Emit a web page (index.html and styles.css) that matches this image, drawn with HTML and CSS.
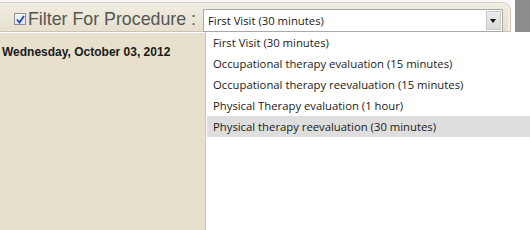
FILE: index.html
```html
<!DOCTYPE html>
<html>
<head>
<meta charset="utf-8">
<link rel="stylesheet" href="styles.css">
</head>
<body>
<div class="header">
  <div class="panel">
    <label class="filter">
      <span class="check">
        <svg width="9" height="9" viewBox="0 0 9 9"><path d="M1 4.5 L3.5 7.5 L8 1" fill="none" stroke="#2a3fb8" stroke-width="1.8"/></svg>
      </span>
      <span class="filter-label">Filter For Procedure :</span>
    </label>
    <div class="select">
      <span class="select-text">First Visit (30 minutes)</span>
      <span class="select-btn"><span class="arrow"></span></span>
    </div>
  </div>
  <div class="gap"></div>
  <div class="gutter"></div>
</div>
<div class="main">
  <div class="left">
    <div class="date">Wednesday, October 03, 2012</div>
  </div>
  <ul class="list">
    <li class="item">First Visit (30 minutes)</li>
    <li class="item">Occupational therapy evaluation (15 minutes)</li>
    <li class="item">Occupational therapy reevaluation (15 minutes)</li>
    <li class="item">Physical Therapy evaluation (1 hour)</li>
    <li class="item item-hover">Physical therapy reevaluation (30 minutes)</li>
  </ul>
</div>
</body>
</html>
```
FILE: styles.css
```css
html, body {
  margin: 0;
  padding: 0;
  background: #ffffff;
  width: 530px;
  height: 230px;
  overflow: hidden;
}
.header {
  display: flex;
  height: 32px;
  background: #f7f7f5;
}
.panel {
  width: 511px;
  box-sizing: border-box;
  height: 30px;
  margin-top: 2px;
  display: flex;
  align-items: flex-start;
  background: linear-gradient(#f1ede2, #e6e0cd);
  border-top: 1px solid #d2cec2;
  border-right: 1px solid #cbc6b4;
  border-top-right-radius: 9px;
  border-bottom: 1px solid #c9c4b2;
  box-shadow: inset -2px 0 0 #f3f0e6;
}
.filter {
  display: flex;
  align-items: center;
  margin-left: 14px;
  margin-top: 6px;
}
.check {
  width: 10px;
  height: 10px;
  border: 1px solid #8f8f9a;
  background: linear-gradient(#f4f6fb, #dfe4ef);
  display: flex;
  align-items: center;
  justify-content: center;
  box-sizing: content-box;
}
.filter-label {
  font-family: "Liberation Sans", Arial, sans-serif;
  font-size: 17.8px;
  color: #555555;
  margin-left: 2px;
  line-height: 20px;
}
.select {
  margin-left: 7px;
  margin-top: 6px;
  width: 300px;
  height: 23px;
  box-sizing: border-box;
  border: 1px solid #a9a9a9;
  background: #ffffff;
  display: flex;
  align-items: center;
  justify-content: space-between;
}
.select-text {
  font-family: "Open Sans", "Noto Sans", sans-serif;
  font-size: 11.3px;
  color: #1a1a1a;
  padding-left: 4px;
}
.select-btn {
  width: 15px;
  height: 19px;
  margin-right: 1px;
  box-sizing: border-box;
  border: 1px solid #c9c9c9;
  background: linear-gradient(#ececec, #d9d9d9);
  display: flex;
  align-items: center;
  justify-content: center;
}
.arrow {
  width: 0;
  height: 0;
  border-left: 3.5px solid transparent;
  border-right: 3.5px solid transparent;
  border-top: 4px solid #111111;
}
.gap {
  width: 4px;
  background: #ffffff;
}
.gutter {
  flex: 1;
  background: #8c8c8c;
}
.main {
  display: flex;
  height: 198px;
}
.left {
  width: 205px;
  background: #e6e0cd;
  border-top: 1px solid #ffffff;
  box-sizing: border-box;
}
.date {
  font-family: "Liberation Sans", Arial, sans-serif;
  font-weight: bold;
  font-size: 12px;
  color: #1a1a1a;
  margin-top: 12px;
  margin-left: 2px;
}
.list {
  flex: 1;
  list-style: none;
  margin: 0;
  padding: 0 0 0 1px;
  border-left: 1px solid #c7c7c7;
  background: #ffffff;
}
.item {
  height: 21px;
  line-height: 21px;
  padding-left: 6px;
  font-family: "Open Sans", "Noto Sans", sans-serif;
  font-size: 11.3px;
  color: #1a1a1a;
  white-space: nowrap;
}
.item-hover {
  background: #dedede;
}
```
